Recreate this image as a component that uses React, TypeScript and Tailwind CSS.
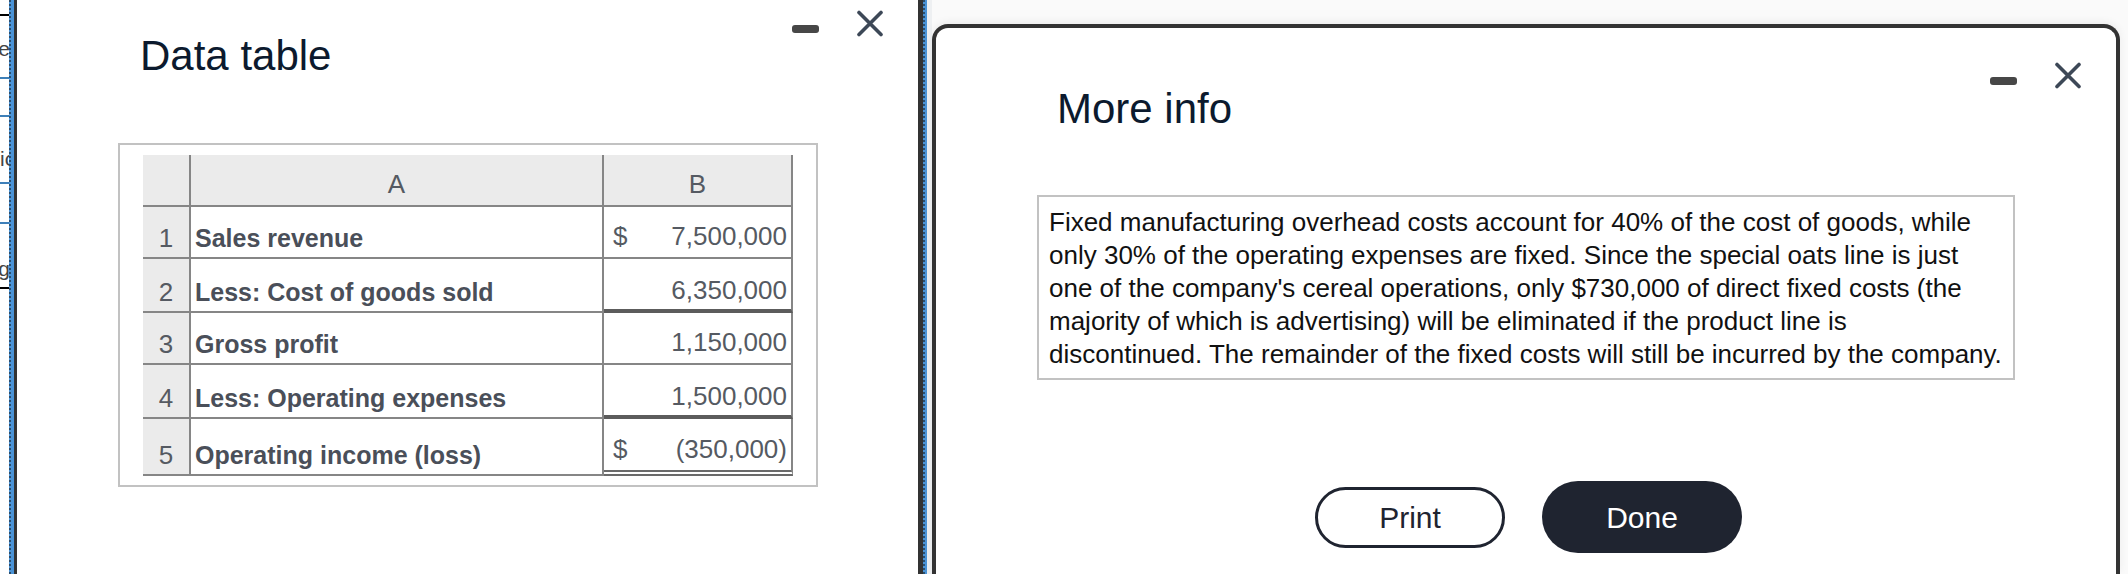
import React from "react";

type Row = {
  n: number;
  label: string;
  value: string;
  dollar?: boolean;
  h: string;
  rule: "plain" | "single" | "double";
};

const rows: Row[] = [
  { n: 1, label: "Sales revenue", value: "7,500,000", dollar: true, h: "h-[52px]", rule: "plain" },
  { n: 2, label: "Less: Cost of goods sold", value: "6,350,000", h: "h-[54px]", rule: "single" },
  { n: 3, label: "Gross profit", value: "1,150,000", h: "h-[52px]", rule: "plain" },
  { n: 4, label: "Less: Operating expenses", value: "1,500,000", h: "h-[54px]", rule: "single" },
  { n: 5, label: "Operating income (loss)", value: "(350,000)", dollar: true, h: "h-[57px]", rule: "double" },
];

const ruleClass = {
  plain: "border-b-2 border-b-[#868686] pb-[8px]",
  single: "border-b-4 border-b-[#5c5c5c] pb-[6px]",
  double: "border-b-[6px] border-double border-b-[#6a6a6a] pb-[8px]",
};

const CloseIcon = () => (
  <svg width="28" height="27" viewBox="0 0 28 27" className="shrink-0">
    <path
      d="M3 2.5L25 24.5M25 2.5L3 24.5"
      stroke="#3d4857"
      strokeWidth="3.6"
      strokeLinecap="round"
    />
  </svg>
);

const WindowButtons = () => (
  <div className="flex items-start gap-[37px]">
    <div className="mt-[15px] h-[8px] w-[27px] rounded-[3px] bg-[#474747]" />
    <CloseIcon />
  </div>
);

// fragment of the page that sits behind the windows
const BackPage = () => (
  <div className="flex w-[9px] shrink-0 flex-col overflow-hidden bg-white text-[21px] leading-none text-[#444]">
    <div className="h-[16px] shrink-0 border-b-2 border-black" />
    <div className="flex h-[63px] shrink-0 items-center justify-end border-b-2 border-[#3d7fb8] pt-[4px]">
      <span className="-mr-[1px] whitespace-nowrap">e</span>
    </div>
    <div className="h-[38px] shrink-0 border-b-2 border-[#3d7fb8]" />
    <div className="flex h-[67px] shrink-0 items-end justify-start border-b-2 border-[#3d7fb8] pb-[13px]">
      <span className="whitespace-nowrap">ic</span>
    </div>
    <div className="h-[40px] shrink-0 border-b-2 border-[#3d7fb8]" />
    <div className="flex h-[65px] shrink-0 items-end justify-end border-b-2 border-black pb-[8px]">
      <span className="-mr-[1px] whitespace-nowrap">g</span>
    </div>
  </div>
);

const Dashes = () => (
  <div className="w-[2px] shrink-0 bg-[repeating-linear-gradient(to_bottom,#2b4e6e_0px,#2b4e6e_2px,#4a93d6_2px,#4a93d6_4px)]" />
);

const DataTable = () => (
  <div className="w-[700px] border-2 border-[#c2c2c2] px-[23px] pt-[10px] pb-[9px]">
    <div className="flex h-[52px] bg-[#ebebeb] text-[26px] leading-[26px] text-[#555a62]">
      <div className="w-[48px] border-r-2 border-b-2 border-[#868686]" />
      <div className="flex w-[413px] items-end justify-center border-r-2 border-b-2 border-[#868686] pb-[8px]">
        A
      </div>
      <div className="flex w-[189px] items-end justify-center border-r-2 border-b-2 border-[#868686] pb-[8px]">
        B
      </div>
    </div>
    {rows.map((r) => (
      <div key={r.n} className={`flex ${r.h} text-[26px] leading-[26px]`}>
        <div className="flex w-[48px] items-end justify-center border-r-2 border-b-2 border-[#868686] bg-[#ebebeb] pb-[6px] text-[#555a62]">
          {r.n}
        </div>
        <div className="flex w-[413px] items-end border-r-2 border-b-2 border-[#868686] pb-[6px] pl-[4px] text-[25px] font-bold text-[#4a4f59]">
          {r.label}
        </div>
        <div
          className={`flex w-[189px] items-end justify-between border-r-2 border-r-[#868686] pl-[9px] pr-[4px] text-[#555a62] ${ruleClass[r.rule]}`}
        >
          <span>{r.dollar ? "$" : ""}</span>
          <span>{r.value}</span>
        </div>
      </div>
    ))}
  </div>
);

export default function App() {
  return (
    <div className="flex h-[574px] w-[2128px] overflow-hidden bg-white font-['Liberation_Sans',Arial,sans-serif]">
      <BackPage />
      <Dashes />
      <div className="w-[3px] shrink-0 bg-[#4a93d6]" />
      <div className="w-[3px] shrink-0 bg-[#333]" />

      {/* Data table window */}
      <div className="flex w-[901px] shrink-0 flex-col bg-white">
        <div className="flex items-start justify-between pt-[10px] pr-[34px] pl-[123px]">
          <h1 className="mt-[25px] text-[42px] leading-[42px] text-[#0c1a2e]">Data table</h1>
          <WindowButtons />
        </div>
        <div className="mt-[66px] pl-[101px]">
          <DataTable />
        </div>
      </div>

      <div className="w-[5px] shrink-0 bg-[#333]" />
      <Dashes />
      <div className="w-[2px] shrink-0 bg-[#4a93d6]" />
      <div className="w-[5px] shrink-0 bg-[#eef0f2]" />

      {/* More info window */}
      <div className="flex flex-1 flex-col bg-[#fafafa] pt-[24px] pr-[8px]">
        <div className="flex flex-1 flex-col rounded-t-[16px] border-x-4 border-t-4 border-[#333] bg-white shadow-[0_-2px_8px_rgba(0,0,0,0.06)]">
          <div className="flex items-start justify-between pt-[34px] pr-[34px] pl-[121px]">
            <h2 className="mt-[26px] text-[42px] leading-[42px] text-[#0c1a2e]">More info</h2>
            <WindowButtons />
          </div>
          <div className="mt-[65px] pl-[101px]">
            <div className="w-[978px] border-2 border-[#c2c2c2] pt-[9px] pr-[10px] pb-[7px] pl-[10px] text-[26px] leading-[33px] whitespace-nowrap text-[#111]">
              Fixed manufacturing overhead costs account for 40% of the cost of goods, while
              <br />
              only 30% of the operating expenses are fixed. Since the special oats line is just
              <br />
              one of the company's cereal operations, only $730,000 of direct fixed costs (the
              <br />
              majority of which is advertising) will be eliminated if the product line is
              <br />
              discontinued. The remainder of the fixed costs will still be incurred by the company.
            </div>
            <div className="mt-[101px] flex w-[978px] items-center justify-center gap-[37px] pl-[5px]">
              <button className="flex h-[61px] w-[190px] items-center justify-center rounded-full border-[3px] border-[#1f2430] bg-white text-[30px] text-[#1f2430]">
                Print
              </button>
              <button className="flex h-[72px] w-[200px] items-center justify-center rounded-full bg-[#1f2430] text-[30px] text-white">
                Done
              </button>
            </div>
          </div>
        </div>
      </div>
    </div>
  );
}
